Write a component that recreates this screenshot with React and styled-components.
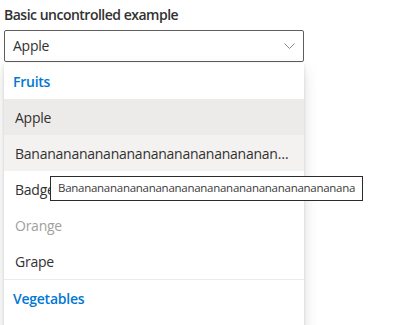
import React from "react";
import styled, { createGlobalStyle } from "styled-components";

const Global = createGlobalStyle`
  html, body { margin: 0; padding: 0; background: #ffffff; }
  body {
    font-family: "Segoe UI", "Open Sans", "Noto Sans", sans-serif;
    color: #323130;
    -webkit-font-smoothing: antialiased;
  }
`;

const Page = styled.div`
  position: relative;
  width: 414px;
  height: 325px;
  overflow: hidden;
  padding: 0 0 0 4px;
  box-sizing: border-box;
`;

const Field = styled.div`
  width: 300px;
`;

const Label = styled.label`
  display: block;
  font-size: 14px;
  font-weight: 600;
  line-height: 20px;
  padding: 5px 0;
  letter-spacing: -0.5px;
`;

const Title = styled.div`
  box-sizing: border-box;
  height: 32px;
  border: 1px solid #605e5c;
  border-radius: 2px;
  display: flex;
  align-items: center;
  padding: 0 8px;
  font-size: 14px;
  letter-spacing: -0.25px;
`;

const TitleText = styled.span`
  flex: 1;
  line-height: 30px;
`;

const Chevron = styled.svg`
  display: block;
  width: 11px;
  height: 6px;
`;

const Menu = styled.div`
  margin-top: 1px;
  width: 300px;
  padding-bottom: 40px;
  background: #ffffff;
  box-shadow: 0 6.4px 14.4px 0 rgba(0, 0, 0, 0.132), 0 1.2px 3.6px 0 rgba(0, 0, 0, 0.108);
`;

const Option = styled.div`
  box-sizing: border-box;
  height: 36px;
  display: flex;
  align-items: center;
  padding: 0 11px;
  font-size: 14px;
  letter-spacing: -0.25px;
  background: ${(p) => (p.$selected ? "#edebe9" : p.$hover ? "#f3f2f1" : "transparent")};
  color: ${(p) => (p.$disabled ? "#a19f9d" : "#323130")};
`;

const OptionText = styled.span`
  display: block;
  min-width: 0;
  overflow: hidden;
  white-space: nowrap;
  text-overflow: ellipsis;
`;

const Header = styled.div`
  box-sizing: border-box;
  height: 36px;
  display: flex;
  align-items: center;
  padding: 0 9px;
  font-size: 14px;
  font-weight: 600;
  color: #0078d4;
  letter-spacing: -0.25px;
`;

const Divider = styled.div`
  height: 1px;
  background: #edebe9;
`;

const Tooltip = styled.div`
  position: absolute;
  left: 50px;
  top: 176px;
  box-sizing: border-box;
  height: 25px;
  padding: 0 7px;
  border: 1px solid #2b2b2b;
  background: #ffffff;
  color: #3b3b3b;
  font-size: 11.5px;
  line-height: 22px;
  white-space: nowrap;
  letter-spacing: -0.27px;
`;

const banana = "Ba" + "na".repeat(22);

const items = [
  { type: "header", text: "Fruits" },
  { text: "Apple", selected: true },
  { text: banana, hover: true },
  { text: "Badger" },
  { text: "Orange", disabled: true },
  { text: "Grape" },
  { type: "divider" },
  { type: "header", text: "Vegetables" },
];

export default function App() {
  return (
    <>
      <Global />
      <Page>
        <Field>
          <Label>Basic uncontrolled example</Label>
          <Title>
            <TitleText>Apple</TitleText>
            <Chevron viewBox="0 0 11 6" aria-hidden="true">
              <polyline points="0.5,0.5 5.5,5.5 10.5,0.5" fill="none" stroke="#8a8886" strokeWidth="1" />
            </Chevron>
          </Title>
          <Menu>
            {items.map((it, i) => {
              if (it.type === "header") return <Header key={i}>{it.text}</Header>;
              if (it.type === "divider") return <Divider key={i} />;
              return (
                <Option key={i} $selected={it.selected} $hover={it.hover} $disabled={it.disabled}>
                  <OptionText>{it.text}</OptionText>
                </Option>
              );
            })}
          </Menu>
        </Field>
        <Tooltip>{banana}</Tooltip>
      </Page>
    </>
  );
}
